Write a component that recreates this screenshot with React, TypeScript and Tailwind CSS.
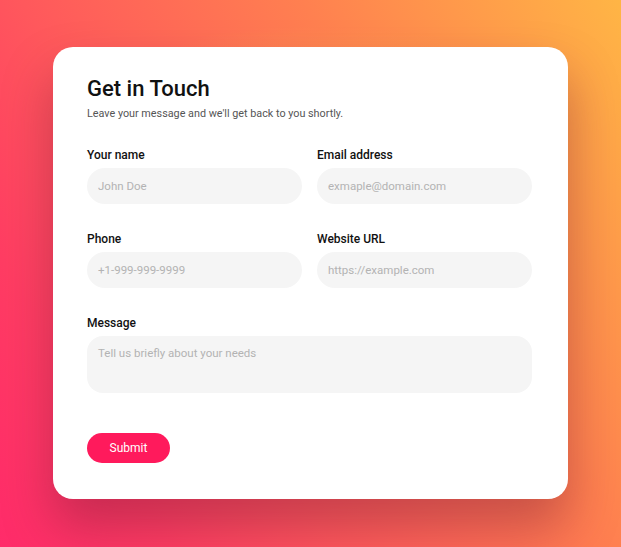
import React from "react";

function Field({ label, placeholder }: { label: string; placeholder: string }) {
  return (
    <div className="flex flex-col">
      <label className="text-[12px] leading-[16px] font-medium text-[#111]">{label}</label>
      <input
        placeholder={placeholder}
        className="mt-[5px] h-[36px] w-full rounded-full bg-[#f5f5f5] px-[11px] text-[11.5px] text-[#333] placeholder:text-[#b3b3b3] outline-none"
      />
    </div>
  );
}

export default function App() {
  return (
    <div
      className="relative w-[621px] h-[547px] overflow-hidden bg-[linear-gradient(60deg,#ff2b6a_0%,#ff3d63_18%,#ff585c_36%,#ff8050_66%,#ffb545_100%)]"
      style={{ fontFamily: "Roboto, 'Noto Sans', sans-serif" }}
    >
      <div className="pointer-events-none absolute left-[90px] top-[25px] w-[460px] h-[150px] rounded-full bg-[radial-gradient(ellipse_at_center,rgba(255,190,80,0.4),rgba(255,190,80,0)_70%)]" />
      <div className="relative flex pt-[47px] pl-[53px]">
        <div className="w-[515px] h-[452px] rounded-[20px] bg-white pt-[29px] pl-[34px] pr-[36px] shadow-[0_28px_50px_rgba(110,20,50,0.38)]">
          <h1 className="text-[22px] leading-[26px] font-medium text-[#111]">Get in Touch</h1>
          <p className="mt-[4px] text-[10.8px] leading-[16px] text-[#555]">
            Leave your message and we'll get back to you shortly.
          </p>
          <div className="mt-[25px] grid grid-cols-2 gap-x-[15px] gap-y-[27px]">
            <Field label="Your name" placeholder="John Doe" />
            <Field label="Email address" placeholder="exmaple@domain.com" />
            <Field label="Phone" placeholder="+1-999-999-9999" />
            <Field label="Website URL" placeholder="https://example.com" />
            <div className="col-span-2 flex flex-col">
              <label className="text-[12px] leading-[16px] font-medium text-[#111]">Message</label>
              <textarea
                placeholder="Tell us briefly about your needs"
                className="mt-[5px] h-[57px] w-full resize-none rounded-[16px] bg-[#f5f5f5] px-[11px] py-[8px] text-[11.5px] leading-[18px] text-[#333] placeholder:text-[#b3b3b3] outline-none"
              />
            </div>
          </div>
          <button className="mt-[40px] h-[30px] w-[83px] rounded-full bg-[#ff1a5c] text-[12px] text-white">
            Submit
          </button>
        </div>
      </div>
    </div>
  );
}
